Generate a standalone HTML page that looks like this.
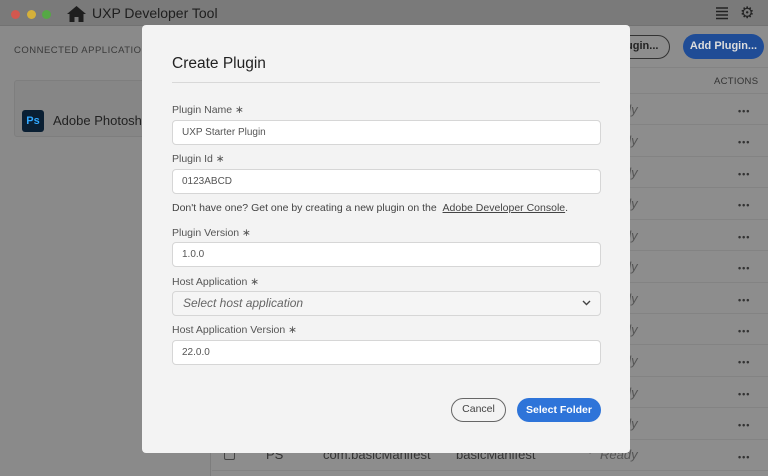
<!DOCTYPE html>
<html><head><style>
*{box-sizing:border-box;margin:0;padding:0}
body{width:768px;height:476px;overflow:hidden;background:#8d8d8d;font-family:"Liberation Sans",sans-serif;position:relative}
.tb{position:absolute;left:0;top:0;width:768px;height:26px;background:#7a7a7a;border-bottom:1px solid #727272}
.dot{position:absolute;top:10px;width:9px;height:9px;border-radius:50%}
.side{position:absolute;left:0;top:26px;width:211px;height:450px;background:#8a8a8a;border-right:1px solid #7d7d7d}
.abs{position:absolute}
.row{position:absolute;left:212px;width:556px;height:32px;border-bottom:1px solid #838383}
.row .d{position:absolute;left:526px;top:12px;color:#333;font-size:9px;font-weight:bold;letter-spacing:1px}
.row .r{position:absolute;left:388px;top:8px;color:#555;font-style:italic;font-size:13px}
.dlg{position:absolute;left:142px;top:25px;width:488px;height:428px;background:#f3f3f3;border-radius:4px}
.lbl{position:absolute;left:30px;font-size:10.5px;color:#555}
.inp{position:absolute;left:30px;width:429px;height:25px;background:#fff;border:1px solid #d6d6d6;border-radius:4px;font-size:10px;color:#555;padding:6px 9px}
</style></head><body>
<div class="tb">
<div class="dot" style="left:11px;background:#d2584f"></div>
<div class="dot" style="left:27px;background:#d5b03a"></div>
<div class="dot" style="left:42px;background:#55a845"></div>
<svg class="abs" style="left:67px;top:6px" width="19" height="16" viewBox="0 0 19 16"><path d="M9.5 0L0 8h2.5v8h5v-5h4v5h5V8H19z" fill="#1e1e1e"/></svg>
<div class="abs" style="left:92px;top:5px;font-size:14px;color:#1e1e1e">UXP Developer Tool</div>
<svg class="abs" style="left:716px;top:7px" width="12" height="13"><g stroke="#222" stroke-width="1.4"><path d="M0 1h12M0 4.5h12M0 8h12M0 11.5h12"/></g></svg>
<div class="abs" style="left:740px;top:3px;font-size:16px;color:#222">⚙</div>
</div>
<div class="side">
<div class="abs" style="left:14px;top:19px;font-size:9.5px;color:#3a3a3a;letter-spacing:.5px">CONNECTED APPLICATIONS</div>
<div class="abs" style="left:14px;top:54px;width:190px;height:57px;background:#868686;border:1px solid #7e7e7e;border-radius:3px"></div>
<div class="abs" style="left:22px;top:84px;width:22px;height:22px;background:#0a1f33;border-radius:3px;color:#31a8ff;font-size:11px;font-weight:bold;text-align:center;line-height:22px">Ps</div>
<div class="abs" style="left:53px;top:87px;font-size:13px;color:#222">Adobe Photoshop</div>
</div>
<div class="abs" style="left:600px;top:35px;width:70px;height:24px;border:1.5px solid #333;border-radius:12px"></div>
<div class="abs" style="left:623px;top:40px;font-size:11px;color:#222;font-weight:bold">lugin...</div>
<div class="abs" style="left:683px;top:34px;width:81px;height:25px;background:#1f4c96;border-radius:13px;color:#ddd;font-size:11px;font-weight:bold;text-align:center;line-height:25px">Add Plugin...</div>
<div class="abs" style="left:212px;top:67px;width:556px;border-top:1px solid #838383"></div>
<div class="abs" style="left:714px;top:76px;font-size:9.5px;color:#333;letter-spacing:.3px">ACTIONS</div>
<div class="abs" style="left:212px;top:93px;width:556px;border-top:1px solid #838383"></div>
<div class="row" style="top:94px;height:31px"><span class="r">Ready</span><span class="d">•••</span></div>
<div class="row" style="top:125px;height:32px"><span class="r">Ready</span><span class="d">•••</span></div>
<div class="row" style="top:157px;height:31px"><span class="r">Ready</span><span class="d">•••</span></div>
<div class="row" style="top:188px;height:32px"><span class="r">Ready</span><span class="d">•••</span></div>
<div class="row" style="top:220px;height:31px"><span class="r">Ready</span><span class="d">•••</span></div>
<div class="row" style="top:251px;height:32px"><span class="r">Ready</span><span class="d">•••</span></div>
<div class="row" style="top:283px;height:31px"><span class="r">Ready</span><span class="d">•••</span></div>
<div class="row" style="top:314px;height:31px"><span class="r">Ready</span><span class="d">•••</span></div>
<div class="row" style="top:345px;height:32px"><span class="r">Ready</span><span class="d">•••</span></div>
<div class="row" style="top:377px;height:31px"><span class="r">Ready</span><span class="d">•••</span></div>
<div class="row" style="top:408px;height:32px"><span class="r">Ready</span><span class="d">•••</span></div>
<div class="row" style="top:440px;height:31px"><span class="abs" style="left:12px;top:9px;width:11px;height:11px;border:1.5px solid #444;border-radius:2px"></span><span class="abs" style="left:54px;top:7px;font-size:13px;color:#333">PS</span><span class="abs" style="left:111px;top:7px;font-size:13px;color:#333">com.basicManifest</span><span class="abs" style="left:244px;top:7px;font-size:13px;color:#333">basicManifest</span><span class="abs" style="left:376px;top:5px;color:#555;font-size:12px">•</span><span class="r" style="top:7px">Ready</span><span class="d">•••</span></div>
<div class="dlg">
<div class="abs" style="left:30px;top:30px;font-size:15.5px;color:#222">Create Plugin</div>
<div class="abs" style="left:30px;top:57px;width:428px;border-top:1px solid #d8d8d8"></div>
<div class="lbl" style="top:79px">Plugin Name ∗</div>
<div class="inp" style="top:95px">UXP Starter Plugin</div>
<div class="lbl" style="top:128px">Plugin Id ∗</div>
<div class="inp" style="top:144px">0123ABCD</div>
<div class="lbl" style="top:177px;color:#444">Don't have one? Get one by creating a new plugin on the &nbsp;<u>Adobe Developer Console</u>.</div>
<div class="lbl" style="top:202px">Plugin Version ∗</div>
<div class="inp" style="top:217px">1.0.0</div>
<div class="lbl" style="top:251px">Host Application ∗</div>
<div class="inp" style="top:266px;background:#f5f5f5;font-style:italic;font-size:12px;padding:4px 10px;color:#666">Select host application<svg class="abs" style="right:9px;top:8px" width="9" height="6"><path d="M1 1l3.5 3.5L8 1" stroke="#444" stroke-width="1.4" fill="none"/></svg></div>
<div class="lbl" style="top:299px">Host Application Version ∗</div>
<div class="inp" style="top:315px">22.0.0</div>
<div class="abs" style="left:309px;top:373px;width:55px;height:24px;border:1.5px solid #666;border-radius:12px;font-size:10.5px;color:#444;text-align:center;line-height:21px">Cancel</div>
<div class="abs" style="left:375px;top:373px;width:84px;height:24px;background:#2e74d9;border-radius:12px;font-size:10.5px;font-weight:bold;color:#fff;text-align:center;line-height:24px">Select Folder</div>
</div>
</body></html>
